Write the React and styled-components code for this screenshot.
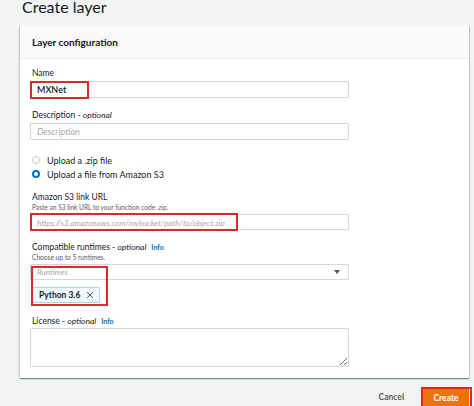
import React from "react"
import styled, { createGlobalStyle } from "styled-components"

const GlobalStyle = createGlobalStyle`
  html, body {
    margin: 0;
    padding: 0;
    background: #f2f3f3;
    font-family: Lato, "Open Sans", sans-serif;
    color: #16191f;
    overflow: hidden;
  }
  * {
    box-sizing: border-box;
  }
`

const Page = styled.div`
  width: 474px;
  height: 406px;
  padding-left: 20px;
  overflow: hidden;
`

const Title = styled.h1`
  margin: -1px 0 10px 2px;
  font-size: 16px;
  line-height: 16px;
  font-weight: 400;
  color: #16191f;
`

const Card = styled.div`
  width: 449px;
  background: #fff;
  box-shadow: 0 1px 1px 0 rgba(0, 28, 36, 0.3), 1px 1px 1px 0 rgba(0, 28, 36, 0.15),
    -1px 1px 1px 0 rgba(0, 28, 36, 0.15);
`

const CardHeader = styled.div`
  height: 34px;
  display: flex;
  align-items: center;
  padding-left: 12px;
  background: #fafafa;
  border-bottom: 1px solid #eaeded;
  font-size: 10px;
  font-weight: 700;
`

const CardBody = styled.div`
  padding: 8px 0 11px 10px;
`

const Field = styled.div`
  position: relative;
  width: 319px;
  margin-top: ${({ gap }) => gap || 0}px;
`

const Anchor = styled.div`
  position: relative;
`

const Label = styled.div`
  font-size: 8.5px;
  line-height: 12px;
  padding-left: 2px;
  margin-bottom: ${({ tight }) => (tight ? 0 : 2)}px;
  color: #16191f;

  em {
    font-style: italic;
    font-size: 8.5px;
  }
`

const Info = styled.span`
  margin-left: 5px;
  color: #0073bb;
  font-weight: 700;
  font-size: 7px;
  font-style: normal;
`

const Hint = styled.div`
  font-size: 6.6px;
  line-height: 9px;
  padding-left: 2px;
  margin-bottom: 2px;
  color: #545b64;
`

const TextInput = styled.input`
  display: block;
  width: 100%;
  height: ${({ h }) => h || 17}px;
  margin: 0;
  padding: 0 6px;
  border: 1px solid #d3d8d8;
  border-radius: 1px;
  background: #fff;
  font-family: Lato, "Open Sans", sans-serif;
  font-size: 9px;
  font-weight: 600;
  color: #16191f;
  outline: none;

  &::placeholder {
    color: #a8a8a8;
    font-style: italic;
    font-weight: 400;
    font-size: ${({ small }) => (small ? 8 : 9)}px;
  }
`

const Highlight = styled.div`
  position: absolute;
  top: ${({ top }) => top}px;
  left: ${({ left }) => left}px;
  width: ${({ w }) => w}px;
  height: ${({ h }) => h}px;
  border: 2px solid #d92b2b;
  pointer-events: none;
`

const RadioGroup = styled.div`
  margin-top: 13px;
`

const RadioRow = styled.label`
  display: flex;
  align-items: center;
  height: 14px;
  padding-left: 2px;
  font-size: 9px;
  color: #16191f;
`

const RadioDot = styled.span`
  width: 8px;
  height: 8px;
  border-radius: 50%;
  margin-right: 7px;
  background: #fff;
  border: ${({ checked }) => (checked ? "2.5px solid #0073bb" : "1px solid #c8cccc")};
`

const Select = styled.div`
  height: 16px;
  display: flex;
  align-items: center;
  justify-content: space-between;
  padding: 0 8px 0 6px;
  border: 1px solid #d3d8d8;
  border-radius: 1px;
  font-size: 8px;
  font-style: italic;
  color: #a8a8a8;
`

const Caret = styled.span`
  width: 0;
  height: 0;
  border-left: 3px solid transparent;
  border-right: 3px solid transparent;
  border-top: 4px solid #545b64;
`

const Token = styled.div`
  display: inline-flex;
  align-items: center;
  margin-top: 7px;
  margin-left: 2px;
  height: 16px;
  padding: 0 5px 0 6px;
  gap: 6px;
  background: #f1faff;
  border: 1px solid #a9d3ee;
  border-radius: 1px;
  font-size: 8.5px;
  font-weight: 700;
  color: #16191f;
`

const TextArea = styled.textarea`
  display: block;
  width: 100%;
  height: 39px;
  margin: 1px 0 0;
  border: 1px solid #d3d8d8;
  border-radius: 1px;
  font-family: Lato, sans-serif;
  outline: none;
`

const Footer = styled.div`
  width: 449px;
  margin-top: 10px;
  display: flex;
  justify-content: flex-end;
  align-items: flex-start;
  gap: 19px;
`

const LinkButton = styled.button`
  margin-top: 4px;
  padding: 0;
  border: none;
  background: none;
  font-family: Lato, sans-serif;
  font-size: 8.5px;
  font-weight: 700;
  color: #545b64;
`

const PrimaryButton = styled.div`
  position: relative;
  width: 46px;
  height: 20px;
  display: flex;
  align-items: center;
  justify-content: center;
  background: #ec7211;
  color: #fff;
  font-size: 8.5px;
  font-weight: 700;
`

const CloseIcon = () => (
  <svg width="8" height="8" viewBox="0 0 8 8">
    <path d="M1 1 L7 7 M7 1 L1 7" stroke="#545b64" strokeWidth="1" fill="none" />
  </svg>
)

export default function App() {
  return (
    <>
      <GlobalStyle />
      <Page>
        <Title>Create layer</Title>
        <Card>
          <CardHeader>Layer configuration</CardHeader>
          <CardBody>
            <Field>
              <Label>Name</Label>
              <Anchor>
                <TextInput defaultValue="MXNet" readOnly />
                <Highlight top={0} left={0} w={59} h={18} />
              </Anchor>
            </Field>

            <Field gap={11}>
              <Label>
                Description - <em>optional</em>
              </Label>
              <TextInput placeholder="Description" readOnly />
            </Field>

            <RadioGroup>
              <RadioRow>
                <RadioDot />
                Upload a .zip file
              </RadioRow>
              <RadioRow>
                <RadioDot checked />
                Upload a file from Amazon S3
              </RadioRow>
            </RadioGroup>

            <Field gap={10}>
              <Label tight>Amazon S3 link URL</Label>
              <Hint>Paste an S3 link URL to your function code .zip.</Hint>
              <Anchor>
                <TextInput
                  h={16}
                  small
                  placeholder="https://s3.amazonaws.com/mybucket/path/to/object.zip"
                  readOnly
                />
                <Highlight top={-1} left={0} w={208} h={18} />
              </Anchor>
            </Field>

            <Field gap={11}>
              <Label tight>
                Compatible runtimes - <em>optional</em>
                <Info>Info</Info>
              </Label>
              <Hint>Choose up to 5 runtimes.</Hint>
              <Anchor>
                <Select>
                  Runtimes
                  <Caret />
                </Select>
                <Token>
                  Python 3.6
                  <CloseIcon />
                </Token>
                <Highlight top={2} left={1} w={77} h={40} />
              </Anchor>
            </Field>

            <Field gap={12}>
              <Label tight>
                License - <em>optional</em>
                <Info>Info</Info>
              </Label>
              <TextArea readOnly />
            </Field>
          </CardBody>
        </Card>
        <Footer>
          <LinkButton>Cancel</LinkButton>
          <PrimaryButton>
            Create
            <Highlight top={-1} left={-2} w={51} h={22} />
          </PrimaryButton>
        </Footer>
      </Page>
    </>
  )
}
